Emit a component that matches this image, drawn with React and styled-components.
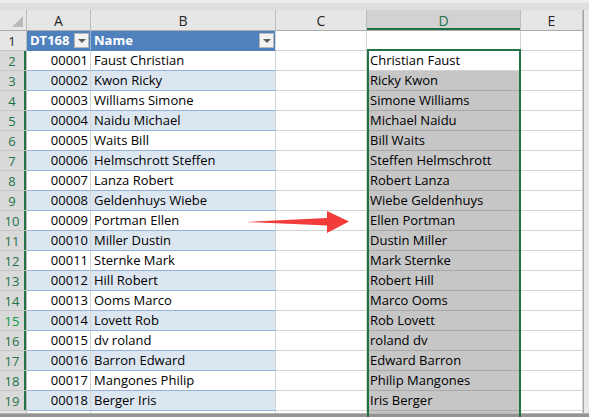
import React from "react";
import styled, { createGlobalStyle } from "styled-components";

const Global = createGlobalStyle`
  html, body { margin: 0; padding: 0; background: #ffffff; }
  body { font-family: "Open Sans", "Liberation Sans", sans-serif; }
`;

const GREEN = "#217346";

const Page = styled.div`
  position: relative;
  width: 589px;
  height: 417px;
  overflow: hidden;
  background: #ffffff;
  display: flex;
  flex-direction: column;
`;

const TopStrip = styled.div`
  height: 10px;
  flex: none;
  background: linear-gradient(#ececec 0 3px, #dedede 3px 100%);
`;

const Middle = styled.div`
  display: flex;
  height: 403px;
  flex: none;
  overflow: hidden;
`;

const Sheet = styled.div`
  display: grid;
  grid-template-columns: 27px 64px 185px 91px 154px 62px;
  grid-auto-rows: 20px;
  grid-template-rows: 21px;
  width: 583px;
  flex: none;
`;

const RightEdge = styled.div`
  flex: 1;
  border-left: 1px solid #a6a6a6;
  background: #e9e9e9;
`;

const BottomBand = styled.div`
  height: 4px;
  flex: none;
  background: linear-gradient(#b4b4b4 0 1px, #949494 1px 100%);
`;

const Cell = styled.div`
  box-sizing: border-box;
  display: flex;
  align-items: center;
  justify-content: ${(p) => (p.$right ? "flex-end" : "flex-start")};
  padding: 0 ${(p) => (p.$right ? "2px" : "0")} 0 ${(p) => (p.$right ? "0" : "3px")};
  background: ${(p) => p.$bg || "#ffffff"};
  border-right: 1px solid ${(p) => p.$vline || "#d4d4d4"};
  border-bottom: 1px solid ${(p) => p.$hline || "#d4d4d4"};
  font-size: 13px;
  color: ${(p) => p.$color || "#000000"};
  font-weight: ${(p) => (p.$bold ? 700 : 400)};
  white-space: nowrap;
  overflow: hidden;
  line-height: 1;
`;

const HeaderCell = styled(Cell)`
  justify-content: space-between;
  padding: 0 1px 0 3px;
`;

const Corner = styled.div`
  box-sizing: border-box;
  background: #e6e6e6;
  border-right: 1px solid #bdbdbd;
  border-bottom: 1px solid #ababab;
  display: flex;
  align-items: flex-end;
  justify-content: flex-end;
  padding: 0 3px 3px 0;
`;

const CornerTriangle = styled.div`
  width: 0;
  height: 0;
  border-left: 11px solid transparent;
  border-bottom: 11px solid #b9b9b9;
`;

const ColHead = styled.div`
  box-sizing: border-box;
  display: flex;
  align-items: center;
  justify-content: center;
  background: ${(p) => (p.$sel ? "#d2d2d2" : "#e6e6e6")};
  color: ${(p) => (p.$sel ? GREEN : "#262626")};
  border-right: 1px solid #bdbdbd;
  border-bottom: 1px solid #ababab;
  box-shadow: ${(p) => (p.$sel ? `inset 0 -2px 0 ${GREEN}` : "none")};
  font-size: 14px;
  padding-top: 1px;
`;

const RowHead = styled.div`
  box-sizing: border-box;
  display: flex;
  align-items: center;
  justify-content: center;
  background: ${(p) => (p.$sel ? "#d9d9d9" : "#e6e6e6")};
  color: ${(p) => (p.$hot ? "#0e9d44" : p.$sel ? GREEN : "#262626")};
  border-right: 1px solid #bdbdbd;
  border-bottom: 1px solid #c6c6c6;
  box-shadow: ${(p) => (p.$sel ? `inset -2px 0 0 ${GREEN}` : "none")};
  font-size: 13px;
  padding-right: 2px;
`;

const FilterButton = styled.div`
  box-sizing: border-box;
  width: 15px;
  height: 15px;
  flex: none;
  background: #f2f2f2;
  border: 1px solid #b7b7b7;
  display: flex;
  align-items: center;
  justify-content: center;
  &::after {
    content: "";
    width: 0;
    height: 0;
    border-left: 4px solid transparent;
    border-right: 4px solid transparent;
    border-top: 4px solid #5e5e5e;
    margin-top: 1px;
  }
`;

const Selection = styled.div`
  position: absolute;
  left: 367px;
  top: 49px;
  width: 154px;
  height: 380px;
  box-sizing: border-box;
  border: 2px solid ${GREEN};
  pointer-events: none;
`;

const Arrow = styled.svg`
  position: absolute;
  left: 244px;
  top: 206px;
  pointer-events: none;
`;

const data = [
  ["00001", "Faust Christian", "Christian Faust"],
  ["00002", "Kwon Ricky", "Ricky Kwon"],
  ["00003", "Williams Simone", "Simone Williams"],
  ["00004", "Naidu Michael", "Michael Naidu"],
  ["00005", "Waits Bill", "Bill Waits"],
  ["00006", "Helmschrott Steffen", "Steffen Helmschrott"],
  ["00007", "Lanza Robert", "Robert Lanza"],
  ["00008", "Geldenhuys Wiebe", "Wiebe Geldenhuys"],
  ["00009", "Portman Ellen", "Ellen Portman"],
  ["00010", "Miller Dustin", "Dustin Miller"],
  ["00011", "Sternke Mark", "Mark Sternke"],
  ["00012", "Hill Robert", "Robert Hill"],
  ["00013", "Ooms Marco", "Marco Ooms"],
  ["00014", "Lovett Rob", "Rob Lovett"],
  ["00015", "dv roland", "roland dv"],
  ["00016", "Barron Edward", "Edward Barron"],
  ["00017", "Mangones Philip", "Philip Mangones"],
  ["00018", "Berger Iris", "Iris Berger"],
];

const BLUE = "#4f81bd";
const BAND = "#dce6f1";
const TLINE = "#95b3d7";

export default function App() {
  return (
    <Page>
      <Global />
      <TopStrip />
      <Middle>
        <Sheet>
          <Corner>
            <CornerTriangle />
          </Corner>
          <ColHead>A</ColHead>
          <ColHead>B</ColHead>
          <ColHead>C</ColHead>
          <ColHead $sel>D</ColHead>
          <ColHead>E</ColHead>

          <RowHead>1</RowHead>
          <HeaderCell $bg={BLUE} $color="#ffffff" $bold $vline="#9ab5d8" $hline={BLUE}>
            DT168
            <FilterButton />
          </HeaderCell>
          <HeaderCell $bg={BLUE} $color="#ffffff" $bold $vline="#d4d4d4" $hline={BLUE}>
            Name
            <FilterButton />
          </HeaderCell>
          <Cell />
          <Cell />
          <Cell />

          {data.map(([id, name, rev], i) => {
            const r = i + 2;
            const band = r % 2 === 1 ? BAND : "#ffffff";
            return (
              <React.Fragment key={id}>
                <RowHead $sel $hot={r === 15}>
                  {r}
                </RowHead>
                <Cell $right $bg={band} $hline={TLINE}>
                  {id}
                </Cell>
                <Cell $bg={band} $hline={TLINE}>
                  {name}
                </Cell>
                <Cell />
                <Cell
                  $bg={r === 2 ? "#ffffff" : "#c6c6c6"}
                  $hline={r === 2 ? "#d4d4d4" : "#a9a9a9"}
                  $vline="#a9a9a9"
                >
                  {rev}
                </Cell>
                <Cell />
              </React.Fragment>
            );
          })}

          <RowHead />
          <Cell />
          <Cell />
          <Cell />
          <Cell $bg="#c6c6c6" />
          <Cell />
        </Sheet>
        <RightEdge />
      </Middle>
      <BottomBand />
      <Selection />
      <Arrow width="110" height="32" viewBox="0 0 110 32">
        <polygon
          points="2,16 83,12 83,5 105,15.5 83,27 83,19.5"
          fill="#f23b3b"
        />
      </Arrow>
    </Page>
  );
}
